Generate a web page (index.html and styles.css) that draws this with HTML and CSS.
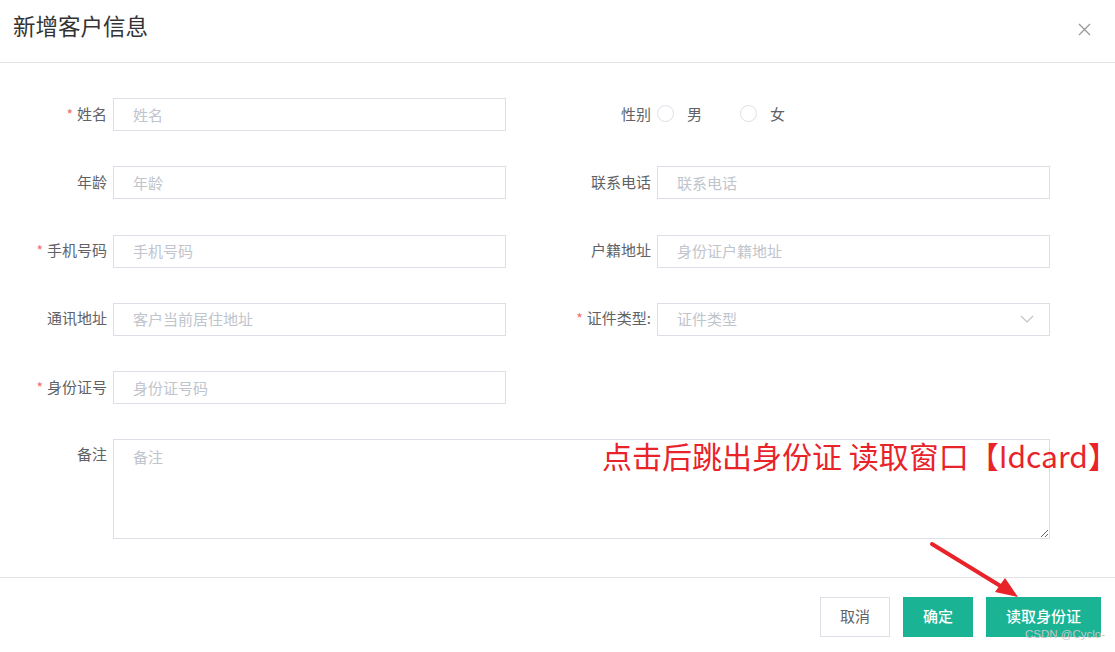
FILE: index.html
```html
<!DOCTYPE html>
<html lang="zh">
<head>
<meta charset="utf-8">
<title>新增客户信息</title>
<link rel="stylesheet" href="styles.css">
</head>
<body>
<div class="dialog">
  <header class="dlg-head">
    <h2 class="title">新增客户信息</h2>
    <button class="close" type="button" aria-label="关闭">
      <svg width="13" height="13" viewBox="0 0 13 13"><path d="M1 1L12 12M12 1L1 12" stroke="#999" stroke-width="1.3" fill="none"/></svg>
    </button>
  </header>
  <form class="dlg-body">
    <div class="row">
      <div class="field"><label class="lbl"><span class="req">*</span>姓名</label><input class="inp" placeholder="姓名"></div>
      <div class="field"><label class="lbl">性别</label>
        <div class="radios">
          <label class="radio"><span class="dot"></span>男</label>
          <label class="radio"><span class="dot"></span>女</label>
        </div>
      </div>
    </div>
    <div class="row">
      <div class="field"><label class="lbl">年龄</label><input class="inp" placeholder="年龄"></div>
      <div class="field"><label class="lbl">联系电话</label><input class="inp" placeholder="联系电话"></div>
    </div>
    <div class="row">
      <div class="field"><label class="lbl"><span class="req">*</span>手机号码</label><input class="inp" placeholder="手机号码"></div>
      <div class="field"><label class="lbl">户籍地址</label><input class="inp" placeholder="身份证户籍地址"></div>
    </div>
    <div class="row">
      <div class="field"><label class="lbl">通讯地址</label><input class="inp" placeholder="客户当前居住地址"></div>
      <div class="field"><label class="lbl"><span class="req">*</span>证件类型:</label>
        <div class="select"><span class="ph">证件类型</span>
          <svg class="chev" width="14" height="8" viewBox="0 0 14 8"><path d="M1 1L7 7L13 1" stroke="#c0c4cc" stroke-width="1.2" fill="none"/></svg>
        </div>
      </div>
    </div>
    <div class="row">
      <div class="field"><label class="lbl"><span class="req">*</span>身份证号</label><input class="inp" placeholder="身份证号码"></div>
    </div>
    <div class="row">
      <div class="field wide"><label class="lbl top">备注</label><textarea class="ta" placeholder="备注"></textarea></div>
    </div>
  </form>
  <footer class="dlg-foot">
    <button class="btn plain" type="button">取消</button>
    <button class="btn primary" type="button">确定</button>
    <button class="btn primary wide-btn" type="button">读取身份证</button>
  </footer>
  <div class="annot">点击后跳出身份证 读取窗口【Idcard<span class="half">】</span></div>
  <svg class="arrow" width="100" height="66" viewBox="0 0 100 66">
    <path d="M7 6L82 52" stroke="#e8232a" stroke-width="4" stroke-linecap="round" fill="none"/>
    <path d="M93 59L70 54L80 40Z" fill="#e8232a"/>
  </svg>
  <span class="wm">CSDN @Cyclo-</span>
</div>
</body>
</html>
```
FILE: styles.css
```css
* { box-sizing: border-box; }
html, body { margin: 0; padding: 0; background: #fff; }
body {
  width: 1115px;
  height: 652px;
  overflow: hidden;
  font-family: "Noto Sans CJK SC", "Noto Sans", sans-serif;
  color: #606266;
}
.dialog { position: relative; width: 1115px; height: 652px; }
.dlg-head {
  height: 63px;
  border-bottom: 1px solid #e4e4e4;
  display: flex;
  justify-content: space-between;
  align-items: flex-start;
  padding: 14px 24px 0 13px;
}
.title {
  margin: 0;
  font-size: 22.5px;
  line-height: 1;
  font-weight: 400;
  color: #333;
}
.close {
  border: 0;
  background: none;
  padding: 0;
  margin-top: 9px;
  width: 13px;
  height: 13px;
  display: block;
}
.close svg { display: block; }
.dlg-body {
  height: 514px;
  padding-top: 35px;
  margin: 0;
}
.row {
  display: flex;
  gap: 38px;
  margin-bottom: 35.25px;
}
.field {
  display: flex;
  align-items: center;
  width: 506px;
}
.field.wide { width: 1050px; align-items: flex-start; }
.lbl {
  width: 113px;
  flex: none;
  padding-right: 6px;
  padding-bottom: 3px;
  text-align: right;
  font-size: 15px;
  color: #606266;
  white-space: nowrap;
}
.lbl.top { padding-top: 4px; padding-bottom: 0; }
.req { color: #f56c6c; margin-right: 4px; font-size: 14px; }
.inp, .select {
  width: 393px;
  height: 33px;
  border: 1px solid #dcdfe6;
  padding: 0 19px 1px;
  font-family: inherit;
  font-size: 15px;
  color: #606266;
  outline: none;
  background: #fff;
  border-radius: 0;
}
.inp::placeholder, .ta::placeholder { color: #c0c4cc; }
.select {
  display: flex;
  align-items: center;
  justify-content: space-between;
  padding-right: 15px;
}
.ph { color: #c0c4cc; padding-bottom: 1px; }
.chev { display: block; margin-top: 1px; }
.radios { display: flex; align-items: center; gap: 38px; }
.radio { display: flex; align-items: center; gap: 13px; font-size: 15px; color: #606266; }
.radio .dot { margin-top: 1px; }
.radio { padding-bottom: 3px; }
.dot {
  width: 17px;
  height: 17px;
  border: 1px solid #dcdfe6;
  border-radius: 50%;
  display: block;
}
.ta {
  width: 937px;
  height: 100px;
  border: 1px solid #dcdfe6;
  padding: 6px 19px;
  font-family: inherit;
  font-size: 15px;
  resize: vertical;
  outline: none;
  border-radius: 0;
}
.dlg-foot {
  border-top: 1px solid #e4e4e4;
  padding: 19px 14px 0 0;
  display: flex;
  justify-content: flex-end;
  gap: 13px;
}
.btn {
  height: 40px;
  width: 70px;
  padding: 0 0 3px;
  font-family: inherit;
  font-size: 15px;
  border-radius: 0;
  cursor: pointer;
}
.btn.plain { background: #fff; border: 1px solid #dcdfe6; color: #606266; }
.btn.primary { background: #1ab394; border: 1px solid #1ab394; color: #fff; font-weight: 500; }
.btn.wide-btn { width: 115px; }
.annot {
  position: absolute;
  left: 602px;
  top: 440px;
  font-size: 30px;
  line-height: 1;
  color: #e8232a;
  white-space: nowrap;
}
.half { font-feature-settings: "halt"; }
.arrow { position: absolute; left: 925px; top: 538px; }
.wm {
  position: absolute;
  left: 1025px;
  top: 628px;
  font-family: "Liberation Sans", Arial, sans-serif;
  font-size: 11.5px;
  color: #c4c6c8;
  white-space: nowrap;
}
```
